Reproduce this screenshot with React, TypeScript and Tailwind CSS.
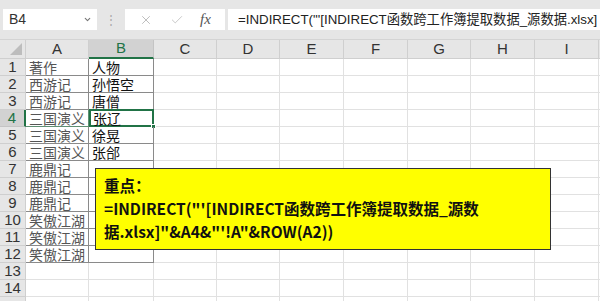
import { ChevronDown, X, Check } from "lucide-react"

const cols = ["A", "B", "C", "D", "E", "F", "G", "H", "I"]

const data: [string, string][] = [
  ["著作", "人物"],
  ["西游记", "孙悟空"],
  ["西游记", "唐僧"],
  ["三国演义", "张辽"],
  ["三国演义", "徐晃"],
  ["三国演义", "张郃"],
  ["鹿鼎记", ""],
  ["鹿鼎记", ""],
  ["鹿鼎记", ""],
  ["笑傲江湖", ""],
  ["笑傲江湖", ""],
  ["笑傲江湖", ""],
]

const cjk = "font-['Noto_Sans_CJK_SC','Noto_Sans',sans-serif]"

function FormulaBar() {
  return (
    <div className="h-[40px] bg-[#e6e6e6] flex items-center pl-[3px] border-b border-[#d4d4d4]">
      <div className="w-[94px] h-[21px] bg-white flex items-center justify-between pl-[6px] pr-[5px] font-['Liberation_Sans',sans-serif] text-[14px] text-[#333]">
        <span>B4</span>
        <ChevronDown className="w-[9px] h-[9px] text-[#777]" strokeWidth={3} />
      </div>
      <div className="w-[28px] flex justify-center text-[#aaa] text-[12px] leading-none">⋮</div>
      <div className="w-[100px] h-[21px] bg-white flex items-center justify-around px-[6px]">
        <X className="w-[14px] h-[14px] text-[#b5b5b5]" strokeWidth={1.5} />
        <Check className="w-[14px] h-[14px] text-[#c0c0c0]" strokeWidth={1.5} />
        <span className="font-['Liberation_Serif',serif] italic text-[15px] text-[#555]">fx</span>
      </div>
      <div className="ml-[3px] flex-1 h-[21px] bg-white flex items-center pl-[10px] text-[13.3px] text-[#222] whitespace-nowrap overflow-hidden font-['Liberation_Sans','Noto_Sans_CJK_SC',sans-serif]">
        =INDIRECT("'[INDIRECT函数跨工作簿提取数据_源数据.xlsx]
      </div>
    </div>
  )
}

export default function App() {
  const rows = Array.from({ length: 15 }, (_, i) => i + 1)
  return (
    <div className="w-[600px] h-[301px] overflow-hidden bg-white relative">
      <FormulaBar />
      <div className="grid grid-cols-[26px_63px_65px_63px_63px_64px_64px_63px_64px_64px_1fr] auto-rows-[17px] grid-rows-[19px] font-['Liberation_Sans',sans-serif]">
        {/* header row */}
        <div className="bg-[#e6e6e6] border-r border-b border-[#cfcfcf] flex items-end justify-end p-[3px]">
          <div className="w-0 h-0 border-l-[12px] border-l-transparent border-b-[12px] border-b-[#bdbdbd]" />
        </div>
        {cols.map((c) => (
          <div
            key={c}
            className={
              c === "B"
                ? "bg-[#d2d2d2] border-r border-[#c4c4c4] border-b-2 border-b-[#217346] flex items-center justify-center text-[15px] text-[#217346]"
                : "bg-[#e6e6e6] border-r border-b border-[#cfcfcf] flex items-center justify-center text-[15px] text-[#333]"
            }
          >
            {c}
          </div>
        ))}
        <div className="bg-[#e6e6e6] border-b border-[#cfcfcf]" />

        {rows.map((r) => {
          const row = data[r - 1]
          const inTable = r <= 12
          const sel = r === 4
          return [
            <div
              key={`h${r}`}
              className={
                sel
                  ? "bg-[#d2d2d2] border-r-2 border-r-[#217346] border-b border-[#c4c4c4] flex items-center justify-center text-[15px] leading-[16px] text-[#217346]"
                  : "bg-[#e6e6e6] border-r border-b border-[#cfcfcf] flex items-center justify-center text-[15px] leading-[16px] text-[#333]"
              }
            >
              {r <= 14 ? r : ""}
            </div>,
            <div
              key={`a${r}`}
              className={`${cjk} text-[14px] leading-[16px] pl-[3px] whitespace-nowrap text-[#555] border-b border-r ${
                sel ? "border-[#5f8f73]" : inTable ? "border-[#8a8a8a]" : "border-[#e1e1e1]"
              }`}
            >
              {row ? row[0] : ""}
            </div>,
            <div
              key={`b${r}`}
              className={`relative ${cjk} text-[14px] whitespace-nowrap text-[#111] ${
                sel
                  ? "border-2 border-[#217346] -mt-px pl-[2px] leading-[15px]"
                  : inTable
                    ? "border-b border-r border-[#8a8a8a] pl-[3px] leading-[16px]"
                    : "border-b border-r border-[#e1e1e1] pl-[3px] leading-[16px]"
              }`}
            >
              {row ? row[1] : ""}
              {sel && <span className="absolute -right-[4px] -bottom-[4px] w-[5px] h-[5px] bg-[#217346] border border-white" />}
            </div>,
            ...cols.slice(2).map((c) => (
              <div key={`${c}${r}`} className="border-b border-r border-[#e1e1e1]" />
            )),
            <div key={`z${r}`} className="border-b border-[#e1e1e1]" />,
          ]
        })}
      </div>

      {/* note box overlay */}
      <div className={`absolute left-[95px] top-[168px] w-[456px] h-[82px] bg-[#ffff00] border border-[#333] ${cjk} font-bold text-[15.5px] leading-[23px] text-[#111] pl-[8px] pt-[5px] whitespace-nowrap`}>
        <div>重点：</div>
        <div>=INDIRECT("'[INDIRECT函数跨工作簿提取数据_源数</div>
        <div>据.xlsx]"&amp;A4&amp;"'!A"&amp;ROW(A2))</div>
      </div>
    </div>
  )
}
